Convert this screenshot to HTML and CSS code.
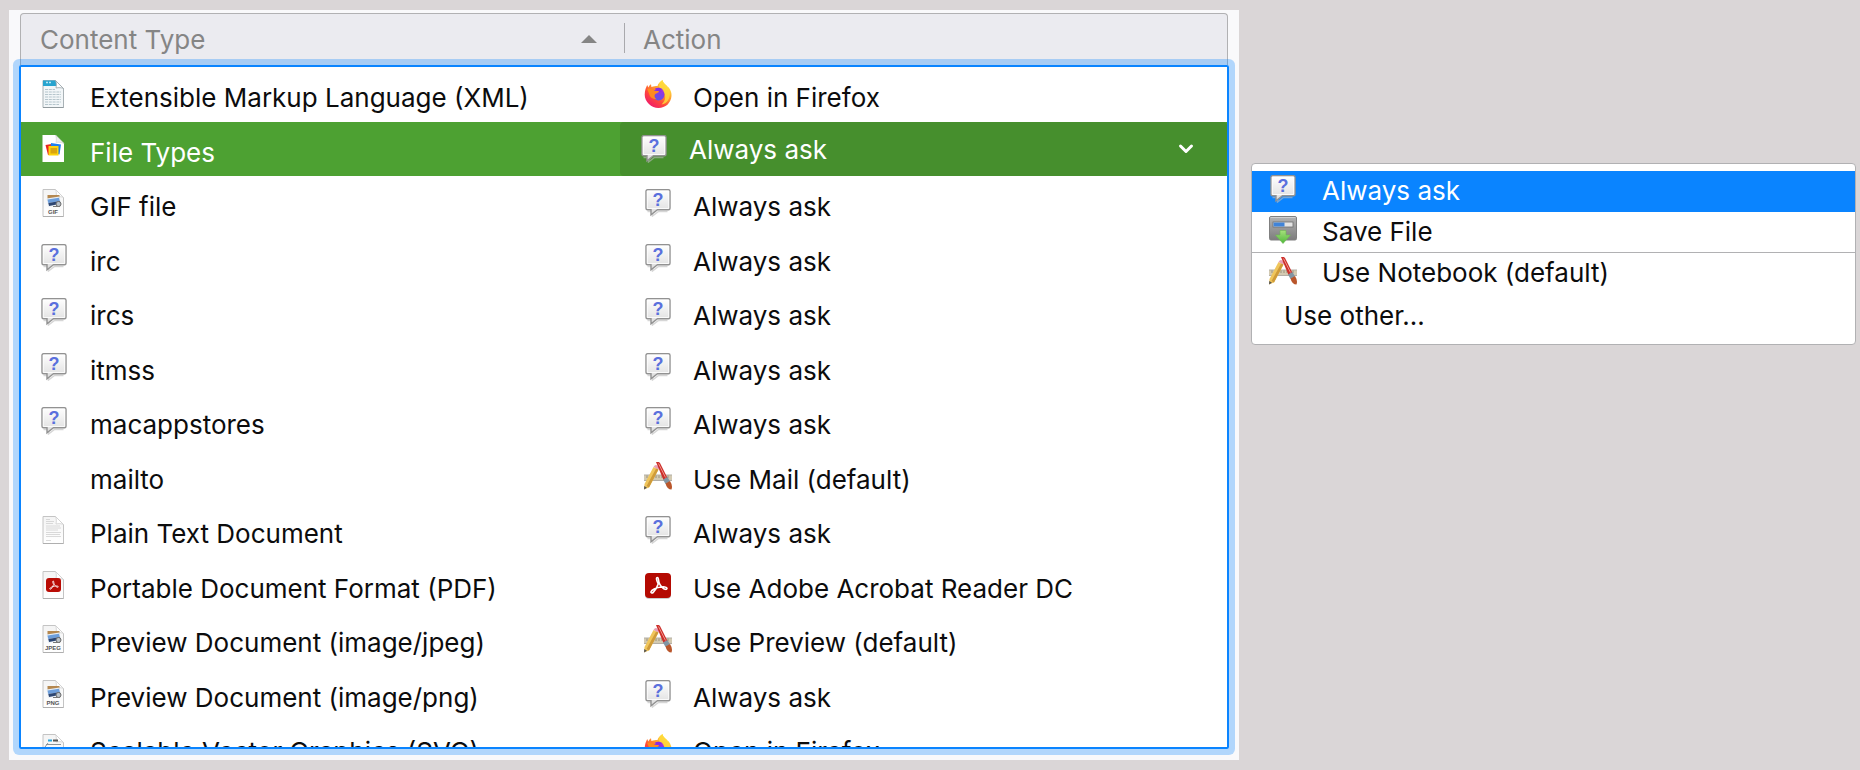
FILE: index.html
```html
<!DOCTYPE html>
<html lang="en">
<head>
    <meta charset="UTF-8">
    <meta name="viewport" content="width=device-width, initial-scale=1.0">
    <title>Applications</title>
    <link rel="stylesheet" href="styles.css">
</head>
<body>
    <!-- Icon definitions -->
    <svg class="defs" aria-hidden="true">
        <defs>
            <linearGradient id="paper" x1="0" y1="0" x2="0" y2="1">
                <stop offset="0" stop-color="#f4f4f4"/>
                <stop offset="1" stop-color="#fff"/>
            </linearGradient>
            <linearGradient id="bubble" x1="0" y1="0" x2="0" y2="1">
                <stop offset="0" stop-color="#fff"/>
                <stop offset="1" stop-color="#dcdcdc"/>
            </linearGradient>
            <linearGradient id="fox" x1="0.85" y1="0.1" x2="0.2" y2="0.95">
                <stop offset="0" stop-color="#fff44f"/>
                <stop offset="0.35" stop-color="#ffa12e"/>
                <stop offset="0.65" stop-color="#ff4a3a"/>
                <stop offset="1" stop-color="#f0196c"/>
            </linearGradient>
            <linearGradient id="globe" x1="0.7" y1="0" x2="0.4" y2="1">
                <stop offset="0" stop-color="#a42be0"/>
                <stop offset="1" stop-color="#5b56e8"/>
            </linearGradient>
            <linearGradient id="drive" x1="0" y1="0" x2="0" y2="1">
                <stop offset="0" stop-color="#b4b4b4"/>
                <stop offset="1" stop-color="#7d7d7d"/>
            </linearGradient>
            <linearGradient id="arrow" x1="0" y1="0" x2="0" y2="1">
                <stop offset="0" stop-color="#a6e07c"/>
                <stop offset="1" stop-color="#4fb83a"/>
            </linearGradient>

            <symbol id="page" viewBox="0 0 28 28">
                <path d="M3 .5h12.500l8 8V27.500H3z" fill="url(#paper)" stroke="#c4c4c4"/>
                <path d="M15.500 .5c1 2 1 5 .5 7.500 2.500-.5 5.500-.5 7.500.5z" fill="#fff" stroke="#cfcfcf" stroke-width=".8"/>
                <path d="M3 27.600h20.500" stroke="#adadad"/>
            </symbol>
            <symbol id="xml" viewBox="0 0 28 28">
                <path d="M3 .5h12.500l8 8V27.500H3z" fill="#f2f6f8" stroke="#a9b2b6"/>
                <path d="M3 .5h12.500l5 5.500H3z" fill="#27a4cf"/>
                <path d="M6 2.500h2M9 2.500h2" stroke="#b9e6f5" stroke-width="1.500"/>
                <path d="M15.500 .5c1 2 1 5 .5 7.500 2.500-.5 5.500-.5 7.500.5z" fill="#fff" stroke="#9aa5aa" stroke-width=".8"/>
                <path d="M5 9.500h10M5 12h16M5 14.500h16M5 17h16M5 19.500h16M5 22h16M5 24.500h14" stroke="#b5c5cc" stroke-dasharray="3 .8"/>
                <path d="M3 27.600h20.500" stroke="#8f989c"/>
            </symbol>
            <symbol id="types" viewBox="0 0 28 28">
                <path d="M2.500 0h13l8.500 8.500V27H2.500z" fill="#fff"/>
                <path d="M15.500 0c1 2 1 5 .5 7.500 2.500-.5 5.500-.2 8 1z" fill="#eee" stroke="#ccc" stroke-width=".6"/>
                <path d="M5.500 10l6-1 1 10-4.500 1z" fill="#e8261c"/>
                <path d="M11 8l10 1.500-1.500 10-9-2z" fill="#1d7ff2"/>
                <path d="M8.500 11h10v9.500h-10z" fill="#fdd30b"/>
                <path d="M10.500 13h6.500v5.500h-6.500z" fill="#d9a410"/>
            </symbol>
            <symbol id="photo" viewBox="0 0 28 28">
                <use href="#page"/>
                <path d="M7.500 6h12v6h-12z" fill="#b58850"/>
                <path d="M6.500 9.500l13-2 2 8-13 2.500z" fill="#e8eef4"/>
                <path d="M7.500 10.500l11.500-1.700 .8 3.200-11.500 2z" fill="#6d9edb"/>
                <path d="M8.300 14l11.500-2 .8 2.800-11.500 2.200z" fill="#2d4672"/>
                <circle cx="18.500" cy="15" r="2.500" fill="#b9c1c8" stroke="#6c6c6c"/>
                <path d="M13 17.500h7" stroke="#777"/>
            </symbol>
            <symbol id="text" viewBox="0 0 28 28">
                <use href="#page"/>
                <path d="M6 3.500h4M6 5.500h8M6 7.500h7M6 10h14M6 12h15M6 14h12M6 16.500h15M6 18.500h14M6 20.500h15M6 24.500h5" stroke="#d0d0d0" stroke-width=".8"/>
            </symbol>
            <symbol id="trefoil" viewBox="0 0 28 28">
                <path d="M13.500 6.500c-1.500 0-1.300 2.500 .7 6.500-1 3-2.500 6-5 8.500-1.500 1-2.500 .2-2.200-.7 .7-2 5-4 8.500-4.500 4-.8 7.500-.5 7.500 1s-2.500 1.300-4-.2c-2.500-2-4.300-5.500-4.500-8.300-.1-1.500-.4-2.300-1-2.300z" fill="none" stroke="#fff" stroke-width="1.600"/>
            </symbol>
            <symbol id="acrobat" viewBox="0 0 28 28">
                <rect x="1" y="3.500" width="26" height="24.500" rx="4" fill="#ccc"/>
                <rect x="1" y="2" width="26" height="25" rx="4" fill="#b40a02"/>
                <use href="#trefoil"/>
            </symbol>
            <symbol id="pdf" viewBox="0 0 28 28">
                <use href="#page"/>
                <rect x="6" y="7" width="15" height="14" rx="3" fill="#b90c05"/>
                <use href="#trefoil" x="6" y="6.500" width="15" height="15"/>
            </symbol>
            <symbol id="svgdoc" viewBox="0 0 28 28">
                <use href="#page"/>
                <path d="M8 6.500h4" stroke="#2ba7dc" stroke-width="2"/>
                <path d="M13 6.500h5" stroke="#555" stroke-width="2"/>
                <path d="M6 10.500h15M8 9l-3 4" stroke="#8b949a" fill="none"/>
            </symbol>
            <symbol id="ask" viewBox="0 0 28 28">
                <path d="M3.500 22.500h5v4.500l6-4.500h9" fill="none" stroke="#bbb" stroke-width="1.500" opacity=".6"/>
                <path d="M3.500 .8h21q1.500 0 1.500 1.500v17q0 1.500-1.500 1.500h-11l-6.500 5v-5h-3.500q-1.500 0-1.500-1.500v-17q0-1.500 1.500-1.500z" fill="url(#bubble)" stroke="#929292" stroke-width="1.400"/>
                <path d="M3.300 2h21.400v17.500H3.300z" fill="none" stroke="#fff" stroke-width=".8"/>
                <text x="14" y="17" class="mark">?</text>
            </symbol>
            <symbol id="firefox" viewBox="0 0 28 28">
                <path d="M.7 14.500C.8 10 2 7.500 3.200 5l1.200 2.500C5 6 6 5 7 4.300l.4 2.700C10 6 11.500 6 13.500 6 14 3.500 16 1.500 18.500 0c.5 2.500 2 3.500 4 5.500 1 .5 1 1 1.300 2.300L24.500 7c2.500 3.500 3.200 6 3 9C27 23 21.500 28 14.500 28S.6 22 .7 14.500z" fill="url(#fox)"/>
                <path d="M18.500 0c.5 2.500 2 3.500 4 5.500 3.500 4 4.500 9 2 14-1.500 3-4 4.500-7 5 3.500-3 4.500-7 3-11-1-2.500-4-4-5.500-6C14.500 4.500 16 1.800 18.500 0z" fill="#ffd83a" opacity=".85"/>
                <circle cx="14.500" cy="14.500" r="6" fill="url(#globe)"/>
                <path d="M11 8.500c2.500-1.200 6-.8 8 1l-3.500 .8 2 1.200-4 .5z" fill="#8a2be2"/>
                <path d="M3.200 9c3-1 5 0 7 1.500 2 .8 3.500 .4 5 .8-1 2-3.500 2-4.500 3.400-.6 2 .5 3.500 2 4.500-4 .2-7-2.200-7.500-5.200z" fill="#ff8a1f"/>
            </symbol>
            <symbol id="app" viewBox="0 0 28 28">
                <path d="M0 13h28v5.500H0z" fill="#d3cab2"/>
                <path d="M0 13h28M0 18.500h28" stroke="#b3afa6"/>
                <path d="M3 13.500v2.500M6 13.500v2.500M9 13.500v2.500M12 13.500v2.500M15 13.500v2.500M18 13.500v2.500M24 13.500v2.500" stroke="#857c62" stroke-width=".7"/>
                <path d="M9.500 5l5 2.500L5 25.500 0 27.500 .5 22z" fill="#f0c65c"/>
                <path d="M12.300 6.300l2.200 1.200L5 25.500l-2.500-1.500z" fill="#cf9b3a"/>
                <path d="M9.500 5q1.500-3 4-1.500t1 4z" fill="#e8a0b4"/>
                <path d="M0 27.500l.3-3.500 2.700 1.800z" fill="#555"/>
                <path d="M12 0q2.500-1 4 1l7.500 15-4 2z" fill="#cc2f2b"/>
                <path d="M14.500 1.500l7 14" stroke="#ef8f86" stroke-width="1"/>
                <path d="M19 17.500l4.500-2.500 2.500 4.500-4.500 2.500z" fill="#8195a3"/>
                <path d="M21.500 21.500l4.500-2.500q3 4.500 1.500 8.500-4.500 0-6-6z" fill="#b9562b"/>
            </symbol>
            <symbol id="save" viewBox="0 0 28 28">
                <rect x=".5" y=".5" width="27" height="23.500" rx="1.500" fill="url(#drive)" stroke="#808080"/>
                <path d="M1.500 1.500h25" stroke="#d0d0d0"/>
                <rect x="4" y="6" width="20" height="5" fill="#e4e4e4" stroke="#6f6f6f" stroke-width=".8"/>
                <path d="M4.500 6.500h11v4h-11z" fill="#4184d8"/>
                <path d="M11 14.500h6V19h4.500L14 27.500 6.500 19H11z" fill="url(#arrow)" stroke="#6dbb52" stroke-width=".6"/>
            </symbol>
        </defs>
    </svg>

    <main class="panel">
        <table class="handlers">
            <thead>
                <tr>
                    <th scope="col" aria-sort="ascending">Content Type <span class="sort"></span></th>
                    <th scope="col">Action</th>
                </tr>
            </thead>
            <tbody tabindex="0">
                <tr>
                    <td><svg class="icon"><use href="#xml"/></svg>Extensible Markup Language (XML)</td>
                    <td><svg class="icon"><use href="#firefox"/></svg>Open in Firefox</td>
                </tr>
                <tr class="selected">
                    <td><svg class="icon"><use href="#types"/></svg><label for="action">File Types</label></td>
                    <td>
                        <svg class="icon"><use href="#ask"/></svg>
                        <select id="action">
                            <option>Always ask</option>
                            <option>Save File</option>
                            <option>Use Notebook (default)</option>
                            <option>Use other...</option>
                        </select>
                        <svg class="chevron" viewBox="0 0 16 12"><path d="M2.500 3l5.500 5.500L13.500 3"/></svg>
                    </td>
                </tr>
                <tr>
                    <td><svg class="icon" viewBox="0 0 28 28"><use href="#photo"/><text x="13" y="25" class="ext">GIF</text></svg>GIF file</td>
                    <td><svg class="icon"><use href="#ask"/></svg>Always ask</td>
                </tr>
                <tr>
                    <td><svg class="icon"><use href="#ask"/></svg>irc</td>
                    <td><svg class="icon"><use href="#ask"/></svg>Always ask</td>
                </tr>
                <tr>
                    <td><svg class="icon"><use href="#ask"/></svg>ircs</td>
                    <td><svg class="icon"><use href="#ask"/></svg>Always ask</td>
                </tr>
                <tr>
                    <td><svg class="icon"><use href="#ask"/></svg>itmss</td>
                    <td><svg class="icon"><use href="#ask"/></svg>Always ask</td>
                </tr>
                <tr>
                    <td><svg class="icon"><use href="#ask"/></svg>macappstores</td>
                    <td><svg class="icon"><use href="#ask"/></svg>Always ask</td>
                </tr>
                <tr>
                    <td><span class="icon"></span>mailto</td>
                    <td><svg class="icon"><use href="#app"/></svg>Use Mail (default)</td>
                </tr>
                <tr>
                    <td><svg class="icon"><use href="#text"/></svg>Plain Text Document</td>
                    <td><svg class="icon"><use href="#ask"/></svg>Always ask</td>
                </tr>
                <tr>
                    <td><svg class="icon"><use href="#pdf"/></svg>Portable Document Format (PDF)</td>
                    <td><svg class="icon"><use href="#acrobat"/></svg>Use Adobe Acrobat Reader DC</td>
                </tr>
                <tr>
                    <td><svg class="icon" viewBox="0 0 28 28"><use href="#photo"/><text x="13" y="25" class="ext">JPEG</text></svg>Preview Document (image/jpeg)</td>
                    <td><svg class="icon"><use href="#app"/></svg>Use Preview (default)</td>
                </tr>
                <tr>
                    <td><svg class="icon" viewBox="0 0 28 28"><use href="#photo"/><text x="13" y="25" class="ext">PNG</text></svg>Preview Document (image/png)</td>
                    <td><svg class="icon"><use href="#ask"/></svg>Always ask</td>
                </tr>
                <tr>
                    <td><svg class="icon"><use href="#svgdoc"/></svg>Scalable Vector Graphics (SVG)</td>
                    <td><svg class="icon"><use href="#firefox"/></svg>Open in Firefox</td>
                </tr>
            </tbody>
        </table>
    </main>

    <div class="menu" role="menu">
        <button type="button" role="menuitem" class="active"><svg class="icon"><use href="#ask"/></svg>Always ask</button>
        <button type="button" role="menuitem"><svg class="icon"><use href="#save"/></svg>Save File</button>
        <hr>
        <button type="button" role="menuitem"><svg class="icon"><use href="#app"/></svg>Use Notebook (default)</button>
        <button type="button" role="menuitem" class="other">Use other...</button>
    </div>
</body>
</html>
```

FILE: styles.css
```css
* {
    box-sizing: border-box;
}

body {
    display: grid;
    grid-template-columns: 1230fr 605fr;
    grid-template-rows: minmax(0, 1fr);
    align-items: start;
    gap: 12px;
    height: 100vh;
    margin: 0;
    padding: 10px 4px 10px 9px;
    font-family: Inter, "Liberation Sans", sans-serif;
    font-size: 26px;
    color: #0c0c0d;
    background-color: #dad6d7;
}

button, select {
    font: inherit;
    color: inherit;
    border: none;
    background: none;
}

.defs {
    position: absolute;
    width: 0;
    height: 0;
}

.icon {
    flex: none;
    width: 28px;
    height: 28px;
}

.mark {
    font: bold 18px "Liberation Sans", sans-serif;
    fill: #5a70dd;
    text-anchor: middle;
}

.ext {
    font: bold 6px "Liberation Sans", sans-serif;
    fill: #555;
    text-anchor: middle;
}

/* Handlers list */
.panel {
    min-width: 0;
    height: 100%;
    padding: 3px 10px 11px;
    background-color: #f9f9fb;
}

.handlers {
    display: flex;
    flex-direction: column;
    height: 100%;
}

thead {
    display: block;
    margin: 0 1px;
    border: 1px solid #b1b1b3;
    border-bottom: none;
    border-radius: 4px 4px 0 0;
    background-color: #ebebf0;
}

tr {
    display: grid;
    grid-template-columns: 599fr 607fr;
}

th {
    display: flex;
    align-items: center;
    justify-content: space-between;
    height: 30px;
    margin: 9px 0 12px;
    padding: 2px 23px 0 19px;
    font-weight: 400;
    color: #858585;
}

th + th {
    margin-left: 4px;
    padding-left: 18px;
    border-left: 1px solid #a9a9ad;
}

.sort {
    border: 8px solid transparent;
    border-top: none;
    border-bottom: 8px solid #858585;
}

tbody {
    position: relative;
    display: block;
    flex: 1;
    min-height: 0;
    overflow-y: auto;
    scrollbar-width: none;
    border: 2px solid #0a84ff;
    border-radius: 2px;
    outline: none;
    background-color: #fff;
    box-shadow: 0 0 0 6px rgba(10, 132, 255, 0.3);
}

tbody tr {
    height: 54px;
}

tbody tr:nth-child(odd) {
    height: 55px;
}

td {
    display: flex;
    align-items: flex-start;
    gap: 22px;
    padding: 13px 0 0 19px;
    line-height: 35px;
    white-space: nowrap;
}

td + td {
    gap: 21px;
    padding-left: 24px;
}

.selected {
    color: #fff;
    background-color: #4da132;
}

.selected td + td {
    padding: 0 33px 0 20px;
    border-radius: 4px;
    background-color: #468f2d;
}

.selected td + td .icon {
    margin-top: 13px;
}

select {
    flex: 1;
    height: 54px;
    padding: 0;
    appearance: none;
    outline: none;
}

.chevron {
    width: 16px;
    height: 12px;
    margin-top: 21px;
    fill: none;
    stroke: #fff;
    stroke-width: 3;
    stroke-linecap: round;
    stroke-linejoin: round;
}

/* Drop-down menu */
.menu {
    min-width: 0;
    margin-top: 153px;
    padding: 7px 0 5px;
    border: 1px solid #b1b1b3;
    border-radius: 4px;
    background-color: #fff;
}

.menu button {
    display: flex;
    gap: 25px;
    width: 100%;
    height: 40px;
    padding: 0 17px;
    line-height: 40px;
    text-align: left;
    white-space: nowrap;
}

.menu .icon {
    margin-top: 4px;
}

.menu .active {
    height: 41px;
    color: #fff;
    background-color: #0a84ff;
}

.menu hr {
    margin: 0;
    border: none;
    border-top: 1px solid #b1b1b3;
}

.menu .other {
    height: 46px;
    padding-left: 32px;
    line-height: 46px;
}
```
